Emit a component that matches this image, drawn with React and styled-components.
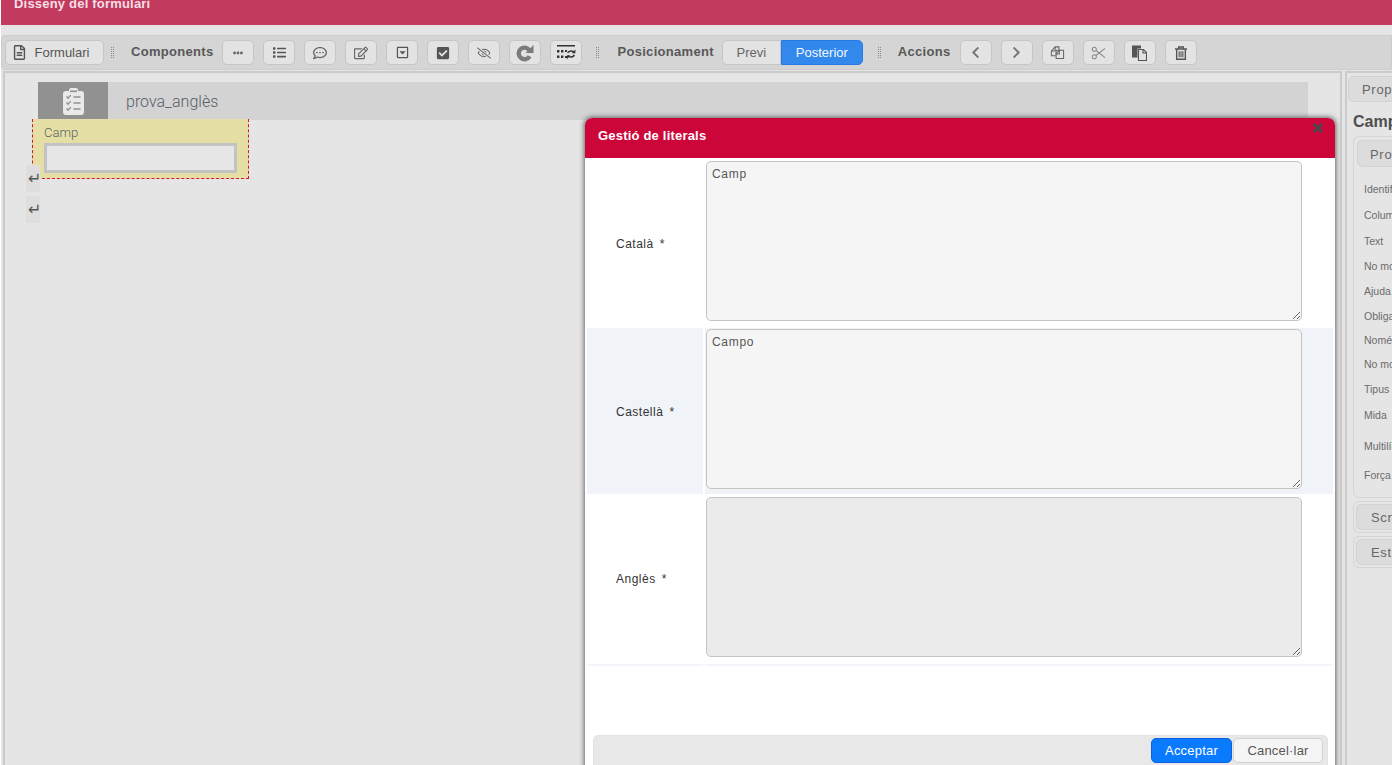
import React from "react";
import styled, { createGlobalStyle } from "styled-components";
import {
  FaRegFileAlt, FaEllipsisH, FaList, FaRegCommentDots, FaRegEdit, FaRegCaretSquareDown,
  FaCheckSquare, FaRegEyeSlash, FaChevronLeft, FaChevronRight, FaTimes,
} from "react-icons/fa";

const Global = createGlobalStyle`
  html, body { margin: 0; padding: 0; background: #fff; height: 100%; overflow: hidden; }
  #root { height: 765px; overflow: hidden; }
  * { box-sizing: border-box; }
`;

const Page = styled.div`
  position: relative;
  height: 765px;
  margin: 0 0 0 1px;
  background: #e5e5e5;
  font-family: "Liberation Sans", Arial, sans-serif;
  color: #555;
  overflow: hidden;
`;

const TopBar = styled.header`
  height: 25px;
  background: #c23a5e;
  color: #f6dfe5;
  font-weight: 700;
  font-size: 13px;
  letter-spacing: 0.2px;
  line-height: 13px;
  padding-left: 13px;
  overflow: hidden;
  & > span { display: block; margin-top: -3px; }
`;

const Toolbar = styled.div`
  margin-top: 10px;
  height: 35px;
  display: flex;
  align-items: center;
  padding-left: 3px;
  background: #d5d5d5;
  border: 1px solid #cdcdcd;
  border-radius: 4px 0 0 4px;
  letter-spacing: 0.3px;
  font-size: 13px;
`;

const Btn = styled.button`
  height: 25px;
  width: ${(p) => p.$w || 32}px;
  margin-right: ${(p) => (p.$mr === undefined ? 9 : p.$mr)}px;
  display: inline-flex;
  align-items: center;
  justify-content: center;
  gap: ${(p) => (p.$label ? 8 : 0)}px;
  padding: 0 ${(p) => (p.$label ? 8 : 0)}px 0 0;
  background: #e3e3e3;
  border: 1px solid #c6c6c6;
  border-radius: 5px;
  color: ${(p) => p.$c || "#555"};
  font: inherit;
  flex: none;
`;

const Grip = styled.i`
  width: 4px;
  height: 12px;
  flex: none;
  margin: 0 ${(p) => p.$mr}px 0 ${(p) => p.$ml || 0}px;
  background-image: linear-gradient(#8a8a8a 50%, transparent 50%),
    linear-gradient(#8a8a8a 50%, transparent 50%);
  background-size: 1px 2px;
  background-position: 0 0, 2px 0;
  background-repeat: repeat-y;
`;

const GroupTitle = styled.b`
  color: #585858;
  font-weight: 700;
  padding-bottom: 2px;
  margin-right: ${(p) => p.$mr}px;
  flex: none;
`;

const Segment = styled.div`
  display: flex;
  flex: none;
  margin-right: 15px;
`;

const SegBtn = styled.button`
  height: 25px;
  width: ${(p) => p.$w}px;
  padding: 0;
  font: inherit;
  color: ${(p) => (p.$on ? "#f2f7ff" : "#666")};
  background: ${(p) => (p.$on ? "#3388ec" : "#e3e3e3")};
  border: 1px solid ${(p) => (p.$on ? "#2a78e4" : "#c6c6c6")};
  border-radius: ${(p) => (p.$on ? "0 5px 5px 0" : "5px 0 0 5px")};
`;

const Workspace = styled.div`
  display: flex;
  height: 700px;
  margin-top: 1px;
  padding-left: 2px;
`;

const Canvas = styled.main`
  width: 1339px;
  flex: none;
  border: 2px solid #cbcbcb;
  border-bottom: 0;
  padding: 9px 0 0 33px;
`;

const FormHead = styled.div`
  display: flex;
  align-items: center;
  width: 1270px;
  height: 38px;
  background: #d3d3d3;
`;

const FormIcon = styled.div`
  width: 70px;
  height: 38px;
  background: #919191;
  color: #e9e9e9;
  display: flex;
  align-items: center;
  justify-content: center;
  margin-right: 18px;
`;

const FormName = styled.span`
  font-family: Roboto, sans-serif;
  font-weight: 300;
  font-size: 16px;
  color: #56606a;
`;

const FieldBox = styled.div`
  position: relative;
  width: 217px;
  height: 60px;
  margin: -1px 0 0 -6px;
  padding: 6px 11px 0;
  background: #e5dfa5;
  border: 1px dashed #d8133a;
  border-top: 0;
  z-index: 1;
`;

const FieldLabel = styled.div`
  font-family: Roboto, sans-serif;
  font-weight: 300;
  font-size: 13px;
  line-height: 16px;
  color: #56646a;
`;

const FieldInput = styled.div`
  margin-top: 2px;
  width: 193px;
  height: 30px;
  background: #e6e6e6;
  border: 3px solid #c3c3c3;
`;

const ReturnMark = styled.div`
  position: relative;
  z-index: 2;
  width: 14px;
  height: 27px;
  margin: ${(p) => p.$mt}px 0 0 -12px;
  padding-left: 2px;
  background: #dedede;
  color: #555;
  font-size: 16px;
  line-height: 27px;
  text-align: center;
  font-family: "DejaVu Sans", sans-serif;
`;

const Side = styled.aside`
  flex: 1;
  min-width: 0;
  margin-left: 3px;
  border-left: 2px solid #cbcbcb;
  border-top: 2px solid #cbcbcb;
  padding: 3px 0 0 1px;
  overflow: hidden;
  white-space: nowrap;
`;

const SideTab = styled.div`
  height: ${(p) => p.$h || 26}px;
  width: 100px;
  padding-left: ${(p) => p.$pl || 13}px;
  line-height: ${(p) => p.$h || 26}px;
  background: #dcdcdc;
  border: 1px solid #d3d3d3;
  border-radius: 5px;
  color: #666;
  font-size: 13px;
  letter-spacing: 0.7px;
`;

const SideTitle = styled.h3`
  margin: 11px 0 5px 5px;
  font-size: 16px;
  line-height: 18px;
  font-weight: 700;
  color: #4f4f4f;
`;

const PropBox = styled.div`
  margin-left: 5px;
  width: 100px;
  height: 362px;
  padding: 3px;
  border: 1px solid #d6d6d6;
  border-radius: 6px;
`;

const PropList = styled.div`
  display: flex;
  flex-direction: column;
  padding: 10px 0 0 7px;
`;

const PropRow = styled.div`
  height: ${(p) => p.$h}px;
  line-height: 25px;
  font-size: 10.5px;
  color: #6b6b6b;
`;

const Outline = styled.div`
  margin: 3px 0 0 5px;
  padding: 2px;
  width: 100px;
  height: ${(p) => p.$h}px;
  border: 1px solid #d6d6d6;
  border-radius: 6px;
`;

const Modal = styled.section`
  position: absolute;
  left: 584px;
  top: 118px;
  width: 750px;
  height: 660px;
  background: #fff;
  border-radius: 7px 7px 0 0;
  box-shadow: 0 0 5px 1px #666;
  z-index: 5;
`;

const ModalHead = styled.div`
  height: 40px;
  background: #cc0639;
  border-radius: 7px 7px 0 0;
  color: #fff;
  font-weight: 700;
  font-size: 13px;
  letter-spacing: 0.2px;
  line-height: 35px;
  padding-left: 13px;
  display: flex;
  justify-content: space-between;
`;

const CloseX = styled.span`
  color: #3f4d4b;
  font-size: 14px;
  margin: 3px 10px 0 0;
  line-height: 15px;
  height: 15px;
`;

const Row = styled.div`
  display: grid;
  grid-template-columns: 116px 628px;
  column-gap: 2px;
  margin-left: 2px;
  height: ${(p) => p.$h}px;
  & > * { background: ${(p) => (p.$alt ? "#f0f4f8" : "transparent")}; }
`;

const LabelCell = styled.div`
  display: flex;
  align-items: center;
  padding: 2px 0 0 29px;
  font-size: 12px;
  letter-spacing: 0.5px;
  word-spacing: -0.8px;
  color: #333;
  white-space: pre;
`;

const AreaCell = styled.div`
  padding: ${(p) => p.$pt}px 0 0 1px;
`;

const Area = styled.textarea`
  display: block;
  width: 596px;
  height: 160px;
  margin: 0;
  padding: 4px 5px;
  border: 1px solid #c4c4c4;
  border-radius: 5px;
  background: ${(p) => (p.$off ? "#ebebeb" : "#f5f5f5")};
  font-family: "Liberation Sans", Arial, sans-serif;
  font-size: 12px;
  line-height: 16px;
  letter-spacing: 0.7px;
  color: #555;
  outline: none;
  resize: vertical;
`;

const RowEnd = styled.div`
  display: grid;
  grid-template-columns: 116px 628px;
  column-gap: 2px;
  margin: 2px 0 0 2px;
  & > i { height: 2px; background: #f2f5f9; display: block; }
`;

const ModalFoot = styled.div`
  position: absolute;
  left: 8px;
  top: 617px;
  width: 735px;
  height: 40px;
  background: #e8e8e8;
  border: 1px solid #e2e2e2;
  border-radius: 5px;
  display: flex;
  justify-content: flex-end;
  padding: 2px 4px 0 0;
  gap: 1px;
`;

const FootBtn = styled.button`
  width: ${(p) => p.$w}px;
  height: 25px;
  padding: 0;
  font-family: "Liberation Sans", Arial, sans-serif;
  font-size: 13px;
  letter-spacing: 0.2px;
  border-radius: 5px;
  color: ${(p) => (p.$primary ? "#fff" : "#555")};
  background: ${(p) => (p.$primary ? "#0a7bff" : "#f5f5f5")};
  border: 1px solid ${(p) => (p.$primary ? "#0a62e0" : "#d2d2d2")};
`;

const ClipboardIcon = () => (
  <svg width="21" height="27" viewBox="0 0 21 27">
    <path fill="currentColor" d="M3 3h3V2a2 2 0 0 1 2-2h5a2 2 0 0 1 2 2v1h3a3 3 0 0 1 3 3v18a3 3 0 0 1-3 3H3a3 3 0 0 1-3-3V6a3 3 0 0 1 3-3z" />
    <path fill="#919191" d="M7 2.5h7v1.6H7z" />
    <path fill="none" stroke="#919191" strokeWidth="1.4" d="M3.5 8.5l1.6 1.6 2.6-3M3.5 14.5l1.6 1.6 2.6-3M3.5 20.5l1.6 1.6 2.6-3" />
    <path fill="none" stroke="#919191" strokeWidth="1.6" d="M10.5 9h7M10.5 15h7M10.5 21h7" />
  </svg>
);

const CloneIcon = () => (
  <svg width="15" height="15" viewBox="0 0 16 16" fill="none" stroke="currentColor" strokeWidth="1.1">
    <path d="M6 11.5H1.5V6.5L5.5 2H9.5V5" />
    <path d="M5.5 2V6.5H1.5" />
    <path d="M6.5 5.5H14.5V14.5H6.5z" />
    <path d="M6.5 9.5L10 5.5V9.5z" />
  </svg>
);

const ScissorsIcon = () => (
  <svg width="15" height="14" viewBox="0 0 16 15" fill="none" stroke="currentColor" strokeWidth="1.1">
    <circle cx="3.5" cy="3.5" r="2.2" />
    <circle cx="3.5" cy="11.5" r="2.2" />
    <path d="M5.3 4.8L15 12.5M5.3 10.2L15 2.5" />
  </svg>
);

const PasteIcon = () => (
  <svg width="15" height="16" viewBox="0 0 15 16">
    <path fill="currentColor" d="M0 0.5h9v3H5.5v9H0z" />
    <path fill="none" stroke="currentColor" strokeWidth="1.1" d="M6.5 4.5h5l3 3v8h-8zM11 4.5v3.5h3.5" />
  </svg>
);

const TrashIcon = () => (
  <svg width="12" height="14" viewBox="0 0 13 15" fill="none" stroke="currentColor">
    <path strokeWidth="1.6" d="M0 3.2h13M4 3V1h5v2" />
    <path strokeWidth="1.5" d="M1.8 3.5v10.7h9.4V3.5" />
    <path strokeWidth="1.2" d="M4.5 5.5v6.5M6.5 5.5v6.5M8.5 5.5v6.5" />
  </svg>
);

const RefreshIcon = () => (
  <svg width="18" height="18" viewBox="0 0 18 18" fill="none">
    <path stroke="currentColor" strokeWidth="4.4" d="M13.2 6A5.8 5.8 0 1 0 13.6 12.2" />
    <path fill="currentColor" d="M17.5 1v8h-8z" />
  </svg>
);

const ListSyncIcon = () => (
  <svg width="19" height="15" viewBox="0 0 19 15" fill="currentColor">
    <path d="M0 0h18v1.6H0zM0 5h2.4v2.4H0zM4 5h2.4v2.4H4zM0 10.5h2.4v2.4H0zM4 10.5h2.4v2.4H4zM8 5h2v2H8zM8 11h2v2H8z" />
    <path fill="none" stroke="currentColor" strokeWidth="1.5" d="M17.4 7.6A4 4 0 0 0 10.6 8M10.8 10.4A4 4 0 0 0 17.4 10" />
    <path d="M18.4 4.4v3.8h-3.8zM9.8 14.2v-3.8h3.8z" />
  </svg>
);

const props = [
  ["Identificador", 26], ["Columnes", 26], ["Text", 25], ["No modificable", 25], ["Ajuda", 25],
  ["Obligatori", 24], ["Només", 24], ["No mostrar", 25], ["Tipus", 26], ["Mida", 31], ["Multilínia", 29], ["Força", 25],
];

export default function App() {
  return (
    <Page>
      <Global />
      <TopBar><span>Disseny del formulari</span></TopBar>
      <Toolbar>
        <Btn $w={99} $mr={7} $label><FaRegFileAlt size={15} />Formulari</Btn>
        <Grip $mr={16} />
        <GroupTitle $mr={9}>Components</GroupTitle>
        <Btn $c="#666"><FaEllipsisH size={10} /></Btn>
        <Btn><FaList size={13} /></Btn>
        <Btn $c="#666"><FaRegCommentDots size={14} /></Btn>
        <Btn $c="#666"><FaRegEdit size={14} /></Btn>
        <Btn><FaRegCaretSquareDown size={13} /></Btn>
        <Btn><FaCheckSquare size={14} /></Btn>
        <Btn $c="#666"><FaRegEyeSlash size={14} /></Btn>
        <Btn $c="#7b7b7b"><RefreshIcon /></Btn>
        <Btn $c="#333" $mr={14}><ListSyncIcon /></Btn>
        <Grip $mr={17} />
        <GroupTitle $mr={8}>Posicionament</GroupTitle>
        <Segment>
          <SegBtn $w={59}>Previ</SegBtn>
          <SegBtn $w={82} $on>Posterior</SegBtn>
        </Segment>
        <Grip $mr={16} />
        <GroupTitle $mr={9}>Accions</GroupTitle>
        <Btn $c="#777"><FaChevronLeft size={13} /></Btn>
        <Btn $c="#777"><FaChevronRight size={13} /></Btn>
        <Btn $c="#666"><CloneIcon /></Btn>
        <Btn $c="#8a8a8a"><ScissorsIcon /></Btn>
        <Btn><PasteIcon /></Btn>
        <Btn><TrashIcon /></Btn>
      </Toolbar>
      <Workspace>
        <Canvas>
          <FormHead>
            <FormIcon><ClipboardIcon /></FormIcon>
            <FormName>prova_anglès</FormName>
          </FormHead>
          <FieldBox>
            <FieldLabel>Camp</FieldLabel>
            <FieldInput />
          </FieldBox>
          <ReturnMark $mt={-14}>↵</ReturnMark>
          <ReturnMark $mt={4}>↵</ReturnMark>
        </Canvas>
        <Side>
          <SideTab>Propietats</SideTab>
          <SideTitle>Camp</SideTitle>
          <PropBox>
            <SideTab $pl={12} $h={27}>Propietats</SideTab>
            <PropList>
              {props.map(([t, h]) => <PropRow key={t} $h={h}>{t}</PropRow>)}
            </PropList>
          </PropBox>
          <Outline $h={32}><SideTab $pl={14} $h={26}>Script</SideTab></Outline>
          <Outline $h={32}><SideTab $pl={14} $h={26}>Estils</SideTab></Outline>
        </Side>
      </Workspace>
      <Modal>
        <ModalHead>
          Gestió de literals
          <CloseX><FaTimes /></CloseX>
        </ModalHead>
        <Row $h={170}>
          <LabelCell>Català  *</LabelCell>
          <AreaCell $pt={3}><Area defaultValue="Camp" /></AreaCell>
        </Row>
        <Row $h={166} $alt>
          <LabelCell>Castellà  *</LabelCell>
          <AreaCell $pt={1}><Area defaultValue="Campo" /></AreaCell>
        </Row>
        <Row $h={168}>
          <LabelCell>Anglès  *</LabelCell>
          <AreaCell $pt={3}><Area $off readOnly defaultValue="" /></AreaCell>
        </Row>
        <RowEnd><i /><i /></RowEnd>
        <ModalFoot>
          <FootBtn $primary $w={81}>Acceptar</FootBtn>
          <FootBtn $w={90}>Cancel·lar</FootBtn>
        </ModalFoot>
      </Modal>
    </Page>
  );
}
